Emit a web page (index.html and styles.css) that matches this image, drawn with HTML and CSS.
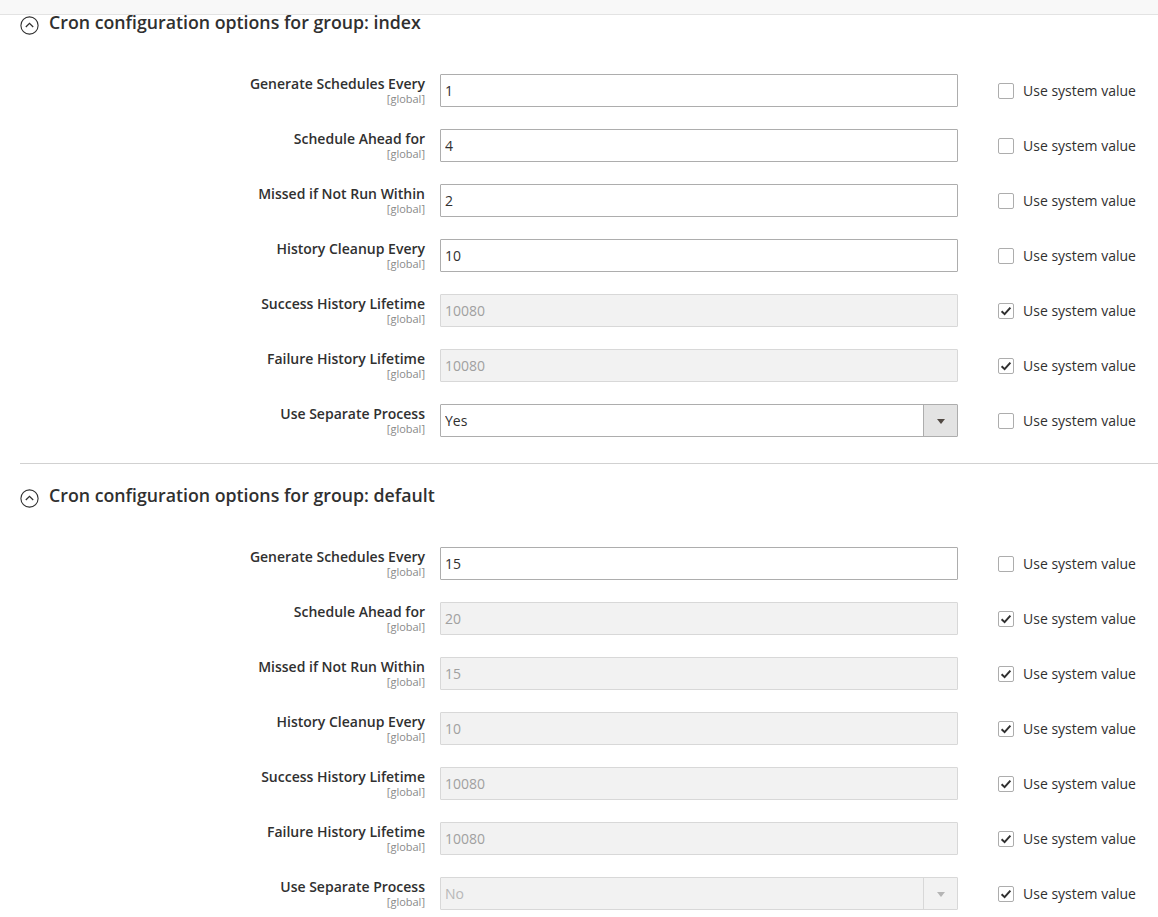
FILE: index.html
```html
<!DOCTYPE html>
<html lang="en">
<head>
    <meta charset="UTF-8">
    <title>Cron configuration</title>
    <link rel="stylesheet" href="styles.css">
</head>
<body>
    <div class="top-bar"></div>

    <div class="section">
        <div class="section-head">
            <svg class="collapse-icon" width="19" height="19" viewBox="0 0 19 19">
                <circle cx="9.5" cy="9.5" r="8.6" fill="none" stroke="#303030" stroke-width="1.1"/>
                <path d="M5.8 11 L9.5 7.4 L13.2 11" fill="none" stroke="#303030" stroke-width="1.3"/>
            </svg>
            <h3>Cron configuration options for group: index</h3>
        </div>

        <div class="fields">
            <div class="row">
                <label>Generate Schedules Every<span class="scope">[global]</span></label>
                <input class="field" type="text" value="1">
                <div class="use-default"><span class="check"></span>Use system value</div>
            </div>
            <div class="row">
                <label>Schedule Ahead for<span class="scope">[global]</span></label>
                <input class="field" type="text" value="4">
                <div class="use-default"><span class="check"></span>Use system value</div>
            </div>
            <div class="row">
                <label>Missed if Not Run Within<span class="scope">[global]</span></label>
                <input class="field" type="text" value="2">
                <div class="use-default"><span class="check"></span>Use system value</div>
            </div>
            <div class="row">
                <label>History Cleanup Every<span class="scope">[global]</span></label>
                <input class="field" type="text" value="10">
                <div class="use-default"><span class="check"></span>Use system value</div>
            </div>
            <div class="row">
                <label>Success History Lifetime<span class="scope">[global]</span></label>
                <input class="field" type="text" value="10080" disabled>
                <div class="use-default"><span class="check checked"><svg width="14" height="14" viewBox="0 0 14 14"><path d="M2.6 7.2 L5.6 10.1 L11.4 3.6" fill="none" stroke="#303030" stroke-width="2"/></svg></span>Use system value</div>
            </div>
            <div class="row">
                <label>Failure History Lifetime<span class="scope">[global]</span></label>
                <input class="field" type="text" value="10080" disabled>
                <div class="use-default"><span class="check checked"><svg width="14" height="14" viewBox="0 0 14 14"><path d="M2.6 7.2 L5.6 10.1 L11.4 3.6" fill="none" stroke="#303030" stroke-width="2"/></svg></span>Use system value</div>
            </div>
            <div class="row">
                <label>Use Separate Process<span class="scope">[global]</span></label>
                <div class="select">
                    <select><option>Yes</option><option>No</option></select>
                    <span class="select-arrow"></span>
                </div>
                <div class="use-default"><span class="check"></span>Use system value</div>
            </div>
        </div>
    </div>

    <div class="section">
        <div class="section-head">
            <svg class="collapse-icon" width="19" height="19" viewBox="0 0 19 19">
                <circle cx="9.5" cy="9.5" r="8.6" fill="none" stroke="#303030" stroke-width="1.1"/>
                <path d="M5.8 11 L9.5 7.4 L13.2 11" fill="none" stroke="#303030" stroke-width="1.3"/>
            </svg>
            <h3>Cron configuration options for group: default</h3>
        </div>

        <div class="fields">
            <div class="row">
                <label>Generate Schedules Every<span class="scope">[global]</span></label>
                <input class="field" type="text" value="15">
                <div class="use-default"><span class="check"></span>Use system value</div>
            </div>
            <div class="row">
                <label>Schedule Ahead for<span class="scope">[global]</span></label>
                <input class="field" type="text" value="20" disabled>
                <div class="use-default"><span class="check checked"><svg width="14" height="14" viewBox="0 0 14 14"><path d="M2.6 7.2 L5.6 10.1 L11.4 3.6" fill="none" stroke="#303030" stroke-width="2"/></svg></span>Use system value</div>
            </div>
            <div class="row">
                <label>Missed if Not Run Within<span class="scope">[global]</span></label>
                <input class="field" type="text" value="15" disabled>
                <div class="use-default"><span class="check checked"><svg width="14" height="14" viewBox="0 0 14 14"><path d="M2.6 7.2 L5.6 10.1 L11.4 3.6" fill="none" stroke="#303030" stroke-width="2"/></svg></span>Use system value</div>
            </div>
            <div class="row">
                <label>History Cleanup Every<span class="scope">[global]</span></label>
                <input class="field" type="text" value="10" disabled>
                <div class="use-default"><span class="check checked"><svg width="14" height="14" viewBox="0 0 14 14"><path d="M2.6 7.2 L5.6 10.1 L11.4 3.6" fill="none" stroke="#303030" stroke-width="2"/></svg></span>Use system value</div>
            </div>
            <div class="row">
                <label>Success History Lifetime<span class="scope">[global]</span></label>
                <input class="field" type="text" value="10080" disabled>
                <div class="use-default"><span class="check checked"><svg width="14" height="14" viewBox="0 0 14 14"><path d="M2.6 7.2 L5.6 10.1 L11.4 3.6" fill="none" stroke="#303030" stroke-width="2"/></svg></span>Use system value</div>
            </div>
            <div class="row">
                <label>Failure History Lifetime<span class="scope">[global]</span></label>
                <input class="field" type="text" value="10080" disabled>
                <div class="use-default"><span class="check checked"><svg width="14" height="14" viewBox="0 0 14 14"><path d="M2.6 7.2 L5.6 10.1 L11.4 3.6" fill="none" stroke="#303030" stroke-width="2"/></svg></span>Use system value</div>
            </div>
            <div class="row">
                <label>Use Separate Process<span class="scope">[global]</span></label>
                <div class="select disabled">
                    <select disabled><option>No</option><option>Yes</option></select>
                    <span class="select-arrow"></span>
                </div>
                <div class="use-default"><span class="check checked"><svg width="14" height="14" viewBox="0 0 14 14"><path d="M2.6 7.2 L5.6 10.1 L11.4 3.6" fill="none" stroke="#303030" stroke-width="2"/></svg></span>Use system value</div>
            </div>
        </div>
    </div>
</body>
</html>
```

FILE: styles.css
```css
* {
    box-sizing: border-box;
}
body {
    margin: 0;
    background: #fff;
    color: #303030;
    font-family: "Open Sans", "Liberation Sans", sans-serif;
    font-size: 14px;
}
.top-bar {
    height: 15px;
    background: #f8f8f8;
    border-bottom: 1px solid #e3e3e3;
}
.section {
    margin-left: 20px;
}
.section + .section {
    border-top: 1px solid #d1d1d1;
    margin-top: 26px;
    padding-top: 22px;
}
.section-head {
    display: flex;
    align-items: center;
    gap: 10px;
    height: 18px;
    margin-top: -2px;
}
.section + .section .section-head {
    margin-top: 0;
}
.collapse-icon {
    margin-top: 6px;
    flex-shrink: 0;
}
.section-head h3 {
    margin: 0;
    font-size: 17.75px;
    line-height: 18px;
    font-weight: 600;
    color: #303030;
}
.fields {
    margin-top: 43px;
    display: flex;
    flex-direction: column;
    gap: 22px;
}
.row {
    display: grid;
    grid-template-columns: 405px 518px auto;
    column-gap: 15px;
    align-items: start;
}
.row label {
    display: flex;
    flex-direction: column;
    align-items: flex-end;
    padding-top: 1px;
    font-weight: 600;
    font-size: 14px;
    line-height: 18px;
    text-align: right;
}
.scope {
    font-weight: 400;
    font-size: 11px;
    line-height: 11px;
    color: #8a8a8a;
}
.field {
    height: 33px;
    width: 100%;
    border: 1px solid #adadad;
    border-radius: 1px;
    padding: 0 4px;
    font-family: inherit;
    font-size: 14px;
    color: #303030;
    background: #fff;
    outline: none;
}
.field:disabled {
    background: #f2f2f2;
    border-color: #d8d8d8;
    color: #a0a0a0;
}
.select {
    display: flex;
    height: 33px;
    border: 1px solid #adadad;
    border-radius: 1px;
    background: #fff;
}
.select select {
    flex: 1;
    appearance: none;
    -webkit-appearance: none;
    border: none;
    background: transparent;
    padding: 0 4px;
    font-family: inherit;
    font-size: 14px;
    color: #303030;
    outline: none;
}
.select-arrow {
    width: 34px;
    background: #e3e3e3;
    border-left: 1px solid #adadad;
    display: flex;
    align-items: center;
    justify-content: center;
}
.select-arrow::after {
    content: "";
    border-left: 4px solid transparent;
    border-right: 4px solid transparent;
    border-top: 5px solid #514943;
    margin-top: 1px;
}
.select.disabled {
    background: #f2f2f2;
    border-color: #d8d8d8;
}
.select.disabled select {
    color: #a0a0a0;
}
.select.disabled .select-arrow {
    background: #f2f2f2;
    border-left-color: #d8d8d8;
}
.select.disabled .select-arrow::after {
    border-top-color: #b5b5b5;
}
.use-default {
    display: flex;
    align-items: center;
    gap: 9px;
    margin-left: 25px;
    height: 33px;
    font-size: 14px;
    color: #303030;
}
.check {
    width: 16px;
    height: 16px;
    border: 1px solid #adadad;
    border-radius: 2px;
    background: #fff;
    display: flex;
    align-items: center;
    justify-content: center;
    flex-shrink: 0;
}
```
